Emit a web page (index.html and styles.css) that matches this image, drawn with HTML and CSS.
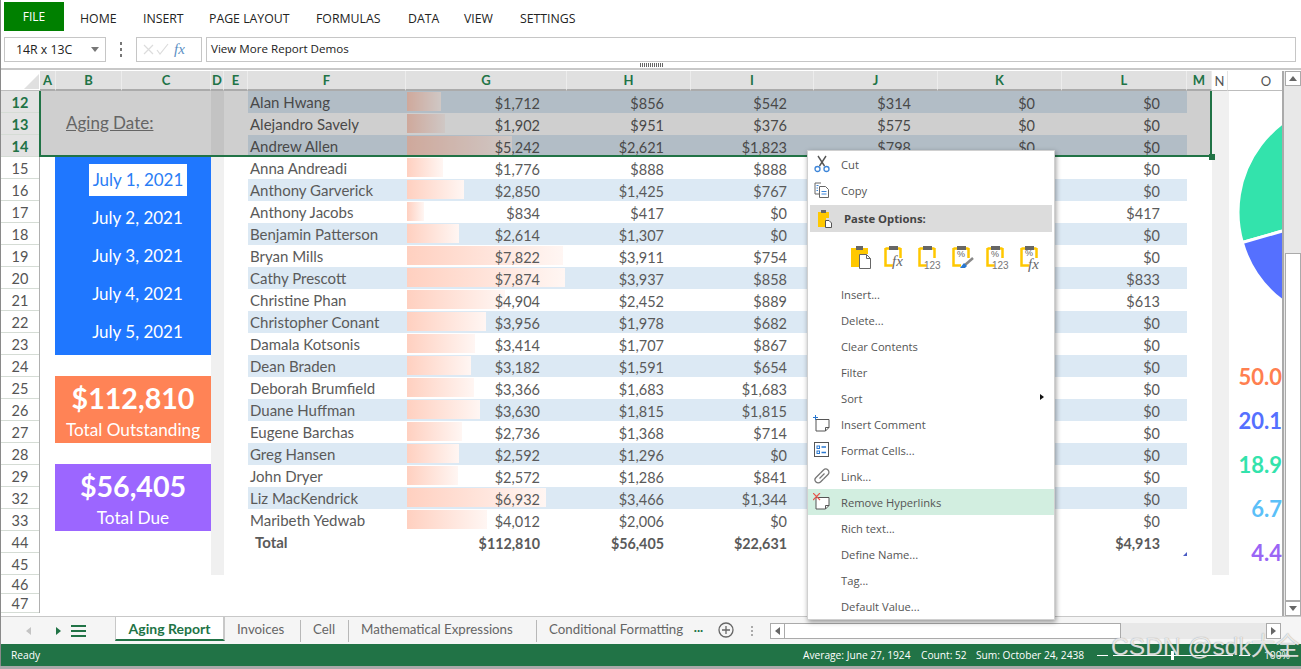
FILE: index.html
```html
<!DOCTYPE html>
<html lang="en">
<head>
<meta charset="utf-8">
<title>Aging Report</title>
<link rel="stylesheet" href="styles.css">
</head>
<body>
<div class="app">
  <nav class="ribbon">
    <div class="file-tab">FILE</div>
    <span class="rib-item w-home">HOME</span>
    <span class="rib-item w-insert">INSERT</span>
    <span class="rib-item w-page">PAGE LAYOUT</span>
    <span class="rib-item w-form">FORMULAS</span>
    <span class="rib-item w-data">DATA</span>
    <span class="rib-item w-view">VIEW</span>
    <span class="rib-item">SETTINGS</span>
  </nav>

  <div class="formula-row">
    <div class="name-box"><span>14R x 13C</span><i class="caret-down"></i></div>
    <div class="vdots"><i></i><i></i><i></i></div>
    <div class="fx-box">
      <svg width="28" height="14" viewBox="0 0 28 14"><path d="M1 2l9 9M10 2l-9 9" stroke="#dcdcdc" stroke-width="1.2" fill="none"/><path d="M14 7l3 4 8-10" stroke="#dcdcdc" stroke-width="1.2" fill="none"/></svg>
      <span class="fx">fx</span>
    </div>
    <div class="formula-input">View More Report Demos</div>
  </div>
  <div class="split-row"><div class="split-handle"></div></div>

  <div class="col-heads">
    <div class="corner"><i></i></div>
    <div class="ch sel w-a">A</div><div class="ch sel w-b">B</div><div class="ch sel w-c">C</div><div class="ch sel w-d">D</div><div class="ch sel w-e">E</div>
    <div class="ch sel w-f">F</div><div class="ch sel w-g">G</div><div class="ch sel w-h">H</div><div class="ch sel w-i">I</div><div class="ch sel w-j">J</div><div class="ch sel w-k">K</div><div class="ch sel w-l">L</div><div class="ch sel w-m">M</div>
    <div class="ch w-n">N</div><div class="ch w-o">O</div>
  </div>

  <div class="sheet-wrap">
    <div class="sheet">
      <div class="row-heads">
        <div class="rh sel">12</div><div class="rh sel">13</div><div class="rh sel">14</div>
        <div class="rh">15</div><div class="rh">16</div><div class="rh">17</div><div class="rh">18</div><div class="rh">19</div><div class="rh">20</div><div class="rh">21</div><div class="rh">22</div><div class="rh">23</div><div class="rh">24</div><div class="rh">25</div><div class="rh">26</div><div class="rh">27</div><div class="rh">28</div><div class="rh">29</div><div class="rh">32</div><div class="rh">33</div><div class="rh">44</div><div class="rh">45</div>
        <div class="rh short">46</div><div class="rh short">47</div>
      </div>

      <aside class="left-panel">
        <div class="aging"><u>Aging Date:</u></div>
        <div class="dates">
          <div class="date"><span class="date-sel">July 1, 2021</span></div>
          <div class="date">July 2, 2021</div>
          <div class="date">July 3, 2021</div>
          <div class="date">July 4, 2021</div>
          <div class="date">July 5, 2021</div>
        </div>
        <div class="kpi orange"><strong>$112,810</strong><span>Total Outstanding</span></div>
        <div class="kpi purple"><strong>$56,405</strong><span>Total Due</span></div>
      </aside>
      <div class="band band-d"></div>

      <section class="table">
        <div class="tr alt"><div class="name">Alan Hwang</div><div class="v g"><i class="bar" style="width:34px"></i><span>$1,712</span></div><div class="v">$856</div><div class="v">$542</div><div class="v">$314</div><div class="v">$0</div><div class="v">$0</div></div>
        <div class="tr"><div class="name">Alejandro Savely</div><div class="v g"><i class="bar" style="width:38px"></i><span>$1,902</span></div><div class="v">$951</div><div class="v">$376</div><div class="v">$575</div><div class="v">$0</div><div class="v">$0</div></div>
        <div class="tr alt"><div class="name">Andrew Allen</div><div class="v g"><i class="bar" style="width:105px"></i><span>$5,242</span></div><div class="v">$2,621</div><div class="v">$1,823</div><div class="v">$798</div><div class="v">$0</div><div class="v">$0</div></div>
        <div class="tr"><div class="name">Anna Andreadi</div><div class="v g"><i class="bar" style="width:36px"></i><span>$1,776</span></div><div class="v">$888</div><div class="v">$888</div><div class="v"></div><div class="v"></div><div class="v">$0</div></div>
        <div class="tr alt"><div class="name">Anthony Garverick</div><div class="v g"><i class="bar" style="width:57px"></i><span>$2,850</span></div><div class="v">$1,425</div><div class="v">$767</div><div class="v"></div><div class="v"></div><div class="v">$0</div></div>
        <div class="tr"><div class="name">Anthony Jacobs</div><div class="v g"><i class="bar" style="width:17px"></i><span>$834</span></div><div class="v">$417</div><div class="v">$0</div><div class="v"></div><div class="v"></div><div class="v">$417</div></div>
        <div class="tr alt"><div class="name">Benjamin Patterson</div><div class="v g"><i class="bar" style="width:52px"></i><span>$2,614</span></div><div class="v">$1,307</div><div class="v">$0</div><div class="v"></div><div class="v"></div><div class="v">$0</div></div>
        <div class="tr"><div class="name">Bryan Mills</div><div class="v g"><i class="bar" style="width:156px"></i><span>$7,822</span></div><div class="v">$3,911</div><div class="v">$754</div><div class="v"></div><div class="v"></div><div class="v">$0</div></div>
        <div class="tr alt"><div class="name">Cathy Prescott</div><div class="v g"><i class="bar" style="width:158px"></i><span>$7,874</span></div><div class="v">$3,937</div><div class="v">$858</div><div class="v"></div><div class="v"></div><div class="v">$833</div></div>
        <div class="tr"><div class="name">Christine Phan</div><div class="v g"><i class="bar" style="width:98px"></i><span>$4,904</span></div><div class="v">$2,452</div><div class="v">$889</div><div class="v"></div><div class="v"></div><div class="v">$613</div></div>
        <div class="tr alt"><div class="name">Christopher Conant</div><div class="v g"><i class="bar" style="width:79px"></i><span>$3,956</span></div><div class="v">$1,978</div><div class="v">$682</div><div class="v"></div><div class="v"></div><div class="v">$0</div></div>
        <div class="tr"><div class="name">Damala Kotsonis</div><div class="v g"><i class="bar" style="width:68px"></i><span>$3,414</span></div><div class="v">$1,707</div><div class="v">$867</div><div class="v"></div><div class="v"></div><div class="v">$0</div></div>
        <div class="tr alt"><div class="name">Dean Braden</div><div class="v g"><i class="bar" style="width:64px"></i><span>$3,182</span></div><div class="v">$1,591</div><div class="v">$654</div><div class="v"></div><div class="v"></div><div class="v">$0</div></div>
        <div class="tr"><div class="name">Deborah Brumfield</div><div class="v g"><i class="bar" style="width:67px"></i><span>$3,366</span></div><div class="v">$1,683</div><div class="v">$1,683</div><div class="v"></div><div class="v"></div><div class="v">$0</div></div>
        <div class="tr alt"><div class="name">Duane Huffman</div><div class="v g"><i class="bar" style="width:73px"></i><span>$3,630</span></div><div class="v">$1,815</div><div class="v">$1,815</div><div class="v"></div><div class="v"></div><div class="v">$0</div></div>
        <div class="tr"><div class="name">Eugene Barchas</div><div class="v g"><i class="bar" style="width:55px"></i><span>$2,736</span></div><div class="v">$1,368</div><div class="v">$714</div><div class="v"></div><div class="v"></div><div class="v">$0</div></div>
        <div class="tr alt"><div class="name">Greg Hansen</div><div class="v g"><i class="bar" style="width:52px"></i><span>$2,592</span></div><div class="v">$1,296</div><div class="v">$0</div><div class="v"></div><div class="v"></div><div class="v">$0</div></div>
        <div class="tr"><div class="name">John Dryer</div><div class="v g"><i class="bar" style="width:51px"></i><span>$2,572</span></div><div class="v">$1,286</div><div class="v">$841</div><div class="v"></div><div class="v"></div><div class="v">$0</div></div>
        <div class="tr alt"><div class="name">Liz MacKendrick</div><div class="v g"><i class="bar" style="width:139px"></i><span>$6,932</span></div><div class="v">$3,466</div><div class="v">$1,344</div><div class="v"></div><div class="v"></div><div class="v">$0</div></div>
        <div class="tr"><div class="name">Maribeth Yedwab</div><div class="v g"><i class="bar" style="width:80px"></i><span>$4,012</span></div><div class="v">$2,006</div><div class="v">$0</div><div class="v"></div><div class="v"></div><div class="v">$0</div></div>
        <div class="tr total"><div class="name">Total</div><div class="v g"><span>$112,810</span></div><div class="v">$56,405</div><div class="v">$22,631</div><div class="v"></div><div class="v"></div><div class="v l-marked">$4,913</div></div>
      </section>
      <div class="band band-n"></div>

      <section class="chart-col">
        <svg class="pie" width="54" height="264" viewBox="0 0 54 264">
          <path d="M121 121L121 10A111 111 0 0 0 14.300 151.500Z" fill="#33e3ac" stroke="#fff" stroke-width="3"/>
          <path d="M121 121L14.300 151.500A111 111 0 0 0 121 232Z" fill="#5570ff" stroke="#fff" stroke-width="3"/>
        </svg>
        <div class="pct c-orange">50.0</div>
        <div class="pct c-blue">20.1</div>
        <div class="pct c-green">18.9</div>
        <div class="pct c-sky">6.7</div>
        <div class="pct c-violet">4.4</div>
      </section>

      <div class="selection"><i class="fill-handle"></i></div>
    </div>

    <div class="vscroll">
      <div class="sb-btn"><i class="tri-up"></i></div>
      <div class="sb-track"></div>
      <div class="sb-thumb"></div>
      <div class="sb-btn"><i class="tri-down"></i></div>
    </div>
  </div>

  <div class="tabbar">
    <div class="tab-nav">
      <i class="nav-l"></i><i class="nav-r"></i>
      <div class="burger"><i></i><i></i><i></i></div>
    </div>
    <div class="tab active">Aging Report</div>
    <div class="tab t-inv">Invoices</div>
    <div class="tab t-cell">Cell</div>
    <div class="tab t-math">Mathematical Expressions</div>
    <div class="tab t-cond">Conditional Formatting</div>
    <div class="tab-more">...</div>
    <svg class="tab-add" width="16" height="16" viewBox="0 0 16 16"><circle cx="8" cy="8" r="7" fill="none" stroke="#666" stroke-width="1.3"/><path d="M8 4v8M4 8h8" stroke="#666" stroke-width="1.3"/></svg>
    <div class="vdots small"><i></i><i></i><i></i></div>
    <div class="hscroll">
      <div class="hs-btn"><i class="tri-left"></i></div>
      <div class="hs-thumb"></div>
      <div class="hs-track"></div>
      <div class="hs-btn"><i class="tri-right"></i></div>
    </div>
  </div>

  <footer class="status">
    <span class="ready">Ready</span>
    <span class="st-avg">Average: June 27, 1924</span>
    <span class="st-count">Count: 52</span>
    <span class="st-sum">Sum: October 24, 2438</span>
    <i class="z-minus"></i>
    <div class="z-slider"><i></i></div>
    <i class="z-plus"></i>
    <span class="z-val">100%</span>
  </footer>

  <div class="menu">
    <div class="mi"><span class="mi-ic"><svg width="18" height="18" viewBox="0 0 18 18"><path d="M5 1l6.500 10M13 1L6.500 11" stroke="#555" stroke-width="1.400" fill="none"/><circle cx="4.500" cy="14" r="2.500" fill="none" stroke="#3d85d8" stroke-width="1.300"/><circle cx="13.500" cy="14" r="2.500" fill="none" stroke="#3d85d8" stroke-width="1.300"/></svg></span>Cut</div>
    <div class="mi"><span class="mi-ic"><svg width="18" height="18" viewBox="0 0 18 18"><path d="M8 2H2v11h4" fill="none" stroke="#666"/><path d="M6.500 5.500h6l3 3V16.500h-9z" fill="#fff" stroke="#666"/><path d="M8.500 10.500h5M8.500 13h5" stroke="#3d85d8"/><path d="M3.500 4.500h2M3.500 7h1.500M3.500 9.500h1.500" stroke="#3d85d8"/></svg></span>Copy</div>
    <div class="mi-head"><svg class="head-ic" width="14" height="18" viewBox="0 0 14 18"><path d="M0 2h11v6H8v9H0z" fill="#ffc800"/><rect x="3" y="0" width="5" height="3" fill="#666"/><path d="M7.500 10.500h3.500l2.500 2.500v4.500h-6z" fill="#fff" stroke="#555"/></svg><b>Paste Options:</b></div>
    <div class="paste-row">
      <svg width="22" height="24" viewBox="0 0 22 24"><path d="M1 3h17v6h-8v13H1z" fill="#ffc800"/><rect x="6" y="1" width="7" height="4" fill="#666"/><path d="M9.500 9.500h7l4 4v10h-11z" fill="#fff" stroke="#666"/><path d="M16.500 9.500v4h4" fill="none" stroke="#666"/></svg>
      <svg width="22" height="24" viewBox="0 0 22 24"><use href="#clip"/><text x="8" y="21" class="ic-fx">fx</text></svg>
      <svg width="22" height="24" viewBox="0 0 22 24"><use href="#clip"/><text x="6" y="24" class="ic-num">123</text></svg>
      <svg width="22" height="24" viewBox="0 0 22 24"><use href="#clip"/><text x="5" y="12" class="ic-pc">%</text><path d="M21 13l-8 7" stroke="#888" stroke-width="2.500"/><path d="M12 18l3 3-2 2H8z" fill="#2a78d0"/></svg>
      <svg width="22" height="24" viewBox="0 0 22 24"><use href="#clip"/><text x="5" y="12" class="ic-pc">%</text><text x="6" y="24" class="ic-num">123</text></svg>
      <svg width="22" height="24" viewBox="0 0 22 24"><use href="#clip"/><text x="5" y="11" class="ic-pc">%</text><text x="8" y="24" class="ic-fx">fx</text></svg>
    </div>
    <div class="mi">Insert...</div>
    <div class="mi">Delete...</div>
    <div class="mi">Clear Contents</div>
    <div class="mi">Filter</div>
    <div class="mi mi-sub">Sort<i class="tri-sub"></i></div>
    <div class="mi"><span class="mi-ic"><svg width="18" height="18" viewBox="0 0 18 18"><path d="M3 4.500h13v8l-3.500 3.500H3z" fill="#fff" stroke="#555"/><path d="M12.500 16v-3.500h3.500" fill="none" stroke="#555"/><path d="M2.500 0v5M0 2.500h5" stroke="#2a78d0"/></svg></span>Insert Comment</div>
    <div class="mi"><span class="mi-ic"><svg width="18" height="18" viewBox="0 0 18 18"><rect x="1.500" y="1.500" width="14" height="14" fill="#fff" stroke="#555"/><rect x="4" y="5" width="2.500" height="2.500" fill="none" stroke="#2a78d0"/><rect x="4" y="10" width="2.500" height="2.500" fill="none" stroke="#2a78d0"/><path d="M8.500 6h4.500M8.500 11.500h4.500" stroke="#2a78d0" stroke-width="1.500"/></svg></span>Format Cells...</div>
    <div class="mi"><span class="mi-ic"><svg width="18" height="18" viewBox="0 0 18 18"><path d="M7.500 6L3 10.500a3 3 0 0 0 4.500 4.500l3-3" fill="none" stroke="#777" stroke-width="1.300"/><path d="M10.500 12L15 7.500A3 3 0 0 0 10.500 3l-3 3" fill="none" stroke="#777" stroke-width="1.300"/><path d="M6.500 11.500l5-5" stroke="#777" stroke-width="1.300"/></svg></span>Link...</div>
    <div class="mi hot"><span class="mi-ic"><svg width="18" height="18" viewBox="0 0 18 18"><path d="M3 4.500h13v8l-3.500 3.500H3z" fill="#fff" stroke="#555"/><path d="M12.500 16v-3.500h3.500" fill="none" stroke="#555"/><path d="M0 0l7 7M7 0L0 7" stroke="#e8534a" stroke-width="1.200"/></svg></span>Remove Hyperlinks</div>
    <div class="mi">Rich text...</div>
    <div class="mi">Define Name...</div>
    <div class="mi">Tag...</div>
    <div class="mi">Default Value...</div>
  </div>

  <div class="watermark">CSDN @sdk大全</div>

  <svg class="defs" width="0" height="0"><defs><g id="clip"><path d="M1.500 3V20.500H9M16.500 3V13M1.500 3.500H6M13 3.500H16.500" fill="none" stroke="#ffc800" stroke-width="2.500"/><rect x="5" y="1" width="9" height="4" fill="#666"/></g></defs></svg>
</div>
</body>
</html>
```

FILE: styles.css
```css
* { box-sizing: border-box; }
html, body { margin: 0; padding: 0; width: 1301px; height: 669px; overflow: hidden; background: #a9a9a9; }
body { font-family: "Lato", "Liberation Sans", sans-serif; color: #555; }
i { display: block; font-style: normal; }

.app { position: relative; width: 1301px; height: 666px; display: flex; flex-direction: column; border-left: 1px solid #8a8a8a; background: #fff; }

/* ribbon */
.ribbon { height: 37px; padding: 2px 0 0 3px; display: flex; align-items: flex-start; font-family: "Open Sans", sans-serif; font-size: 12.300px; color: #222; }
.file-tab { width: 60px; height: 29px; background: #008000; color: #fff; display: flex; align-items: center; justify-content: center; margin-right: 16px; font-size: 12px; }
.rib-item { line-height: 33px; white-space: nowrap; }
.w-home { width: 63px; }
.w-insert { width: 66px; }
.w-page { width: 107px; }
.w-form { width: 92px; }
.w-data { width: 56px; }
.w-view { width: 56px; }

/* formula */
.formula-row { height: 24px; padding-left: 3px; display: flex; font-family: "Open Sans", sans-serif; font-size: 12.300px; color: #222; }
.name-box { width: 102px; height: 25px; border: 1px solid #c6c6c6; display: flex; align-items: center; padding: 0 6px 0 11px; justify-content: space-between; }
.caret-down { border: 4px solid transparent; border-top: 5px solid #777; border-bottom: 0; }
.vdots { width: 30px; display: flex; flex-direction: column; align-items: center; justify-content: center; gap: 3px; }
.vdots i { width: 2px; height: 3px; background: #777; }
.fx-box { width: 66px; height: 25px; border: 1px solid #c6c6c6; display: flex; align-items: center; padding-left: 6px; }
.fx { font-family: "Liberation Serif", serif; font-style: italic; font-size: 15px; color: #5b8fc4; margin-left: 3px; }
.formula-input { width: 1090px; height: 25px; margin-left: 4px; border: 1px solid #c6c6c6; line-height: 22px; padding-left: 4px; font-size: 11.600px; }

.split-row { height: 9px; border-bottom: 2px solid #c8c8c8; display: flex; justify-content: center; padding-top: 2px; }
.split-handle { width: 24px; height: 4px; margin-left: 2px; background-image: linear-gradient(90deg, #666 1px, transparent 1px), linear-gradient(#fff 1px, transparent 1px); background-size: 2px 2px; }

/* column headers */
.col-heads { height: 20px; margin-top: 1px; display: flex; font-weight: 700; font-size: 13px; }
.corner { width: 39px; height: 20px; background: #fff; display: flex; justify-content: flex-end; align-items: flex-end; padding: 0 1px 1px 0; border-bottom: 1px solid #bdbdbd; }
.corner i { width: 0; height: 0; border-left: 15px solid transparent; border-bottom: 15px solid #e0e0e0; }
.ch { height: 20px; display: flex; align-items: center; justify-content: center; color: #555; font-weight: 400; border-bottom: 1px solid #bdbdbd; border-right: 1px solid #e4e4e4; }
.ch.sel { background: #e0e0e0; color: #217346; font-weight: 700; border-bottom: 2px solid #ababab; border-right-color: #ececec; }
.w-a { width: 16px; } .w-b { width: 66px; } .w-c { width: 89px; } .w-d { width: 13px; } .w-e { width: 24px; }
.w-f { width: 158px; } .w-g { width: 161px; } .w-h { width: 124px; } .w-i { width: 123px; } .w-j { width: 124px; } .w-k { width: 124px; } .w-l { width: 125px; } .w-m { width: 25px; }
.w-n { width: 16px; } .w-o { width: 54px; padding-left: 22px; border-right: 0; }

/* sheet */
.sheet-wrap { flex: 0 0 auto; display: flex; height: 525px; }
.sheet { position: relative; width: 1281px; display: flex; overflow: hidden; }
.row-heads { width: 39px; height: 522px; flex: none; border-right: 1px solid #b0b0b0; font-size: 14.500px; }
.rh { height: 22px; display: flex; align-items: center; justify-content: center; padding-top: 1px; border-bottom: 1px solid #d5dcd5; color: #555; background: #fff; }
.rh.sel { background: #e3e3e3; color: #217346; font-weight: 700; }
.rh.short { height: 19px; }

.left-panel { width: 171px; flex: none; padding-left: 15px; }
.aging { height: 66px; margin-left: -15px; padding: 0 0 3px 26px; display: flex; align-items: center; font-size: 17px; color: #7d7d7d; }
.dates { width: 156px; height: 198px; background: #1f77ff; color: #fff; font-size: 17px; }
.date { height: 38px; display: flex; align-items: center; justify-content: center; padding-top: 7px; padding-left: 9px; }
.date-sel { background: #fff; color: #2a7df5; width: 98px; height: 32px; display: flex; align-items: center; justify-content: center; margin-left: 1px; }
.kpi { width: 156px; height: 67px; margin-top: 21px; color: #fff; display: flex; flex-direction: column; align-items: center; font-size: 17.200px; line-height: 21px; }
.kpi strong { font-size: 28.600px; line-height: 40px; margin-top: 2px; }
.kpi span { margin-top: 1px; }
.orange { background: #ff8356; }
.purple { background: #9c66ff; }
.band { flex: none; height: 484px; background: #f0f0f0; }
.band-d { width: 13px; }
.band-n { width: 17px; }

.table { width: 988px; flex: none; padding: 0 25px 0 24px; font-size: 15px; color: #5a5a5a; }
.tr { height: 22px; display: grid; grid-template-columns: 158px 161px 124px 123px 124px 124px 125px; }
.tr.alt { background: #dce9f4; }
.name { padding-left: 2px; line-height: 23px; white-space: nowrap; }
.v { position: relative; text-align: right; padding-right: 27px; line-height: 25px; font-size: 14.500px; }
.v span { position: relative; }
.bar { position: absolute; left: 1px; top: 1px; height: 19px; background: linear-gradient(90deg, #ffd0c0, #fff6f3); }
.total { font-weight: 700; }
.total .name { padding-left: 7px; }
.total .v { font-size: 14.300px; }
.l-marked::after { content: ""; position: absolute; right: 0; bottom: 0; border-left: 4px solid transparent; border-bottom: 4px solid #4a5cc4; }

.chart-col { width: 54px; flex: none; overflow: hidden; margin-left: -1px; }
.pie { display: block; }
.pct { height: 44px; text-align: right; font-size: 22px; line-height: 44px; font-weight: 700; }
.c-orange { color: #ff7f50; } .c-blue { color: #5570ff; } .c-green { color: #33e3ac; } .c-sky { color: #5bc0f8; } .c-violet { color: #9a66f5; }

.selection { position: absolute; left: 38px; top: -1px; width: 1173px; height: 67px; background: rgba(0,0,0,.19); border-left: 2px solid #217346; border-right: 2px solid #217346; border-bottom: 2px solid #217346; }
.fill-handle { position: absolute; right: -5px; bottom: -5px; width: 6px; height: 6px; background: #217346; }

/* vertical scrollbar */
.vscroll { width: 19px; flex: none; margin-top: -20px; height: 545px; background: #e8e8e8; border-left: 2px solid #aaa; display: flex; flex-direction: column; }
.sb-btn { height: 15px; flex: none; background: #fff; border: 1px solid #aaa; display: flex; align-items: center; justify-content: center; margin-left: 1px; }
.sb-track { height: 167px; flex: none; }
.sb-thumb { flex: 1; background: #fff; border: 1px solid #aaa; margin-left: 1px; }
.tri-up { border: 4px solid transparent; border-bottom: 5px solid #666; border-top: 0; }
.tri-down { border: 4px solid transparent; border-top: 5px solid #666; border-bottom: 0; }

/* tabs */
.tabbar { height: 28px; display: flex; align-items: flex-start; background: #f5f5f5; border-top: 1px solid #c8c8c8; font-size: 13.300px; color: #666; }
.tab-nav { width: 114px; height: 27px; display: flex; align-items: center; padding-left: 25px; }
.nav-l { border: 4px solid transparent; border-right: 5px solid #c4c4c4; border-left: 0; }
.nav-r { border: 4px solid transparent; border-left: 5px solid #217346; border-right: 0; margin-left: 25px; }
.burger { margin-left: 10px; width: 15px; display: flex; flex-direction: column; gap: 3px; }
.burger i { height: 2px; background: #217346; }
.tab { height: 22px; margin-top: 3px; padding-left: 12px; border-right: 1px solid #b8b8b8; line-height: 18px; white-space: nowrap; overflow: hidden; }
.tab.active { width: 110px; height: 25px; margin-top: -1px; background: #fff; border: 2px solid #c8c8c8; border-top-width: 1px; border-bottom: 2px solid #217346; border-left-width: 1px; color: #217346; font-weight: 700; font-size: 14px; line-height: 23px; text-align: center; padding: 0; }
.t-inv { width: 76px; } .t-cell { width: 48px; } .t-math { width: 188px; }
.t-cond { width: 148px; border-right: 0; }
.tab-more { width: 33px; text-align: center; color: #217346; font-weight: 700; line-height: 20px; padding-right: 6px; }
.tab-add { margin-top: 5px; }
.vdots.small { width: 36px; height: 27px; gap: 2px; }
.vdots.small i { height: 2px; background: #aaa; }
.hscroll { width: 511px; height: 16px; margin-top: 6px; display: flex; }
.hs-btn { width: 15px; height: 16px; flex: none; background: #fff; border: 1px solid #aaa; display: flex; align-items: center; justify-content: center; }
.hs-thumb { width: 336px; background: #fff; border: 1px solid #aaa; border-left: 0; flex: none; }
.hs-track { flex: 1; background: #e8e8e8; }
.tri-left { border: 4px solid transparent; border-right: 5px solid #666; border-left: 0; }
.tri-right { border: 4px solid transparent; border-left: 5px solid #666; border-right: 0; }

/* status */
.status { height: 22px; background: #217346; color: #fff; font-family: "Open Sans", sans-serif; font-size: 10.200px; display: flex; align-items: center; padding-left: 10px; white-space: nowrap; }
.ready { width: 792px; }
.st-avg { width: 118px; }
.st-count { width: 55px; }
.st-sum { width: 121px; }
.z-minus { width: 11px; height: 1px; background: #fff; }
.z-slider { width: 120px; height: 1px; margin-left: 5px; background: #fff; position: relative; }
.z-slider i { position: absolute; left: 58px; top: -4px; width: 3px; height: 9px; background: #fff; }
.z-plus { width: 11px; height: 1px; margin-left: 6px; background: #fff; }
.z-val { margin-left: 14px; }

/* context menu */
.menu { position: absolute; left: 806px; top: 150px; width: 248px; height: 470px; background: #fff; border: 1px solid #d0d0d0; box-shadow: 1px 2px 5px rgba(0,0,0,.4); font-family: "Open Sans", sans-serif; font-size: 11.200px; color: #555; z-index: 5; }
.mi { height: 26px; padding-left: 33px; position: relative; display: flex; align-items: center; white-space: nowrap; }
.mi-ic { position: absolute; left: 5px; top: 4px; width: 18px; height: 18px; }
.mi-ic svg { display: block; }
.mi.hot { background: #d2eee0; }
.mi-head { height: 27px; margin: 2px 2px 0; background: #dcdcdc; display: flex; align-items: center; padding-left: 8px; font-size: 11.300px; color: #444; }
.mi-head b { margin-left: 12px; font-weight: 700; }
.head-ic { display: block; }
.paste-row { height: 49px; padding: 13px 0 0 42px; display: flex; gap: 12px; }
.paste-row svg { display: block; flex: none; overflow: visible; }
.ic-fx { font-family: "Liberation Serif", serif; font-style: italic; font-size: 15px; fill: #666; }
.ic-num { font-family: "Liberation Sans", sans-serif; font-size: 10px; fill: #777; }
.ic-pc { font-family: "Liberation Sans", sans-serif; font-size: 9px; fill: #666; }
.tri-sub { position: absolute; right: 10px; top: 9px; border: 3.500px solid transparent; border-left: 4px solid #111; border-right: 0; }

.watermark { position: absolute; left: 1110px; top: 632px; font-family: "Liberation Sans", "Noto Sans CJK SC", sans-serif; font-size: 24.600px; line-height: 30px; color: rgba(255,255,255,.8); text-shadow: 0 0 1px rgba(90,90,90,.7); white-space: nowrap; z-index: 6; }
.defs { position: absolute; }
```
